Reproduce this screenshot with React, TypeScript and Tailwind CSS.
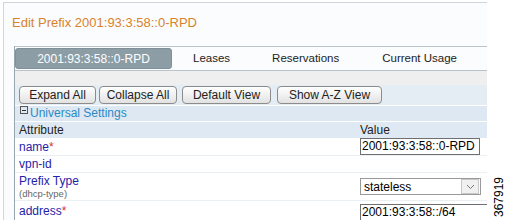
import React from "react";

const font = { fontFamily: '"Liberation Sans", Arial, sans-serif' };

function Btn({ label, cls }: { label: string; cls: string }) {
  return (
    <button
      className={`h-[18px] ${cls} rounded-[4px] border border-[#8c8c8c] bg-gradient-to-b from-[#ffffff] to-[#e2e2e2] text-[12px] leading-[16px] text-[#222] flex items-center justify-center shrink-0`}
    >
      {label}
    </button>
  );
}

export default function App() {
  return (
    <div className="relative w-[507px] h-[220px] overflow-hidden bg-white" style={font}>
      <div className="ml-[3px] mt-[2px] w-[484px] h-[218px] border-l border-t border-[#cfd5da] bg-[#fbfcfd] flex flex-col overflow-hidden">
        <div className="h-[43px] shrink-0 pl-[8px] pt-[12px] text-[13px] leading-[16px] text-[#d9822b]">
          Edit Prefix 2001:93:3:58::0-RPD
        </div>
        <div className="ml-[10px] flex-1 border-l border-[#9aa6ad] flex flex-col min-w-0">
          <div className="h-[25px] shrink-0 border-t border-b border-[#b9c3c9] flex items-center">
            <div className="h-[21px] w-[157px] shrink-0 rounded-[3px] bg-[#8c9da5] border border-[#7f9099] text-white text-[12px] flex items-center justify-center">
              2001:93:3:58::0-RPD
            </div>
            <div className="ml-[21px] text-[11.5px] text-[#222]">Leases</div>
            <div className="ml-[42px] text-[11.5px] text-[#222]">Reservations</div>
            <div className="ml-[43px] text-[11.5px] text-[#222]">Current Usage</div>
          </div>
          <div className="flex-1 bg-[#efefef] flex flex-col pt-[14px]">
            <div className="h-[20px] shrink-0 bg-[#e4ecf4] flex items-center pl-[4px]">
              <Btn label="Expand All" cls="w-[77px]" />
              <Btn label="Collapse All" cls="w-[78px] ml-[3px]" />
              <Btn label="Default View" cls="w-[89px] ml-[5px]" />
              <Btn label="Show A-Z View" cls="w-[105px] ml-[6px]" />
            </div>
            <div className="h-[16px] shrink-0 bg-[#dde8f2] border-t border-white flex pl-[5px] text-[12px] leading-[15px] text-[#2b8ac6]">
              <span className="w-[8px] h-[8px] border border-[#555] mr-[2px] flex items-center justify-center">
                <span className="w-[4px] h-[1px] bg-[#333]" />
              </span>
              Universal Settings
            </div>
            <div className="h-[17px] shrink-0 bg-[#dfe9f3] border-t border-white flex items-end text-[12px] leading-[15px] text-[#222]">
              <div className="w-[345px] shrink-0 pl-[4px]">Attribute</div>
              <div>Value</div>
            </div>
            <div className="bg-white flex-1 flex flex-col">
              <div className="h-[18px] shrink-0 flex items-center border-b border-[#eaeff4]">
                <div className="w-[345px] shrink-0 pl-[4px] text-[12px] text-[#1f23a8]">
                  name<span className="text-[#e0302a]">*</span>
                </div>
                <div className="w-[120px] shrink-0 h-[17px] border border-[#6f6f6f] bg-white text-[12px] leading-[15px] pl-[1px] text-black">
                  2001:93:3:58::0-RPD
                </div>
              </div>
              <div className="h-[17px] shrink-0 flex items-center border-b border-[#eaeff4]">
                <div className="pl-[4px] text-[12px] text-[#1f23a8]">vpn-id</div>
              </div>
              <div className="h-[28px] shrink-0 flex items-center border-b border-[#eaeff4]">
                <div className="w-[345px] shrink-0 pl-[4px] flex flex-col">
                  <span className="text-[12px] leading-[14px] text-[#1f23a8]">Prefix Type</span>
                  <span className="text-[9.5px] leading-[11px] text-[#666]">(dhcp-type)</span>
                </div>
                <div className="w-[121px] shrink-0 h-[17px] border border-[#9a9a9a] bg-white flex items-center">
                  <span className="flex-1 pl-[3px] text-[12px] text-black">stateless</span>
                  <span className="w-[18px] h-[15px] mr-[1px] border border-[#c8c8c8] bg-[#f0f0f0] flex items-center justify-center">
                    <svg width="9" height="6" viewBox="0 0 9 6">
                      <path d="M1 1 L4.5 4.5 L8 1" fill="none" stroke="#777" strokeWidth="1" />
                    </svg>
                  </span>
                </div>
              </div>
              <div className="h-[20px] shrink-0 flex items-start pt-[3px]">
                <div className="w-[345px] shrink-0 pl-[4px] text-[12px] leading-[14px] text-[#1f23a8]">
                  address<span className="text-[#e0302a]">*</span>
                </div>
                <div className="w-[135px] shrink-0 h-[17px] border border-[#6f6f6f] border-r-0 bg-white text-[12px] leading-[15px] pl-[1px] text-black">
                  2001:93:3:58::/64
                </div>
              </div>
            </div>
          </div>
        </div>
      </div>
      <div className="absolute left-[492px] top-[217px] origin-top-left -rotate-90 text-[12px] leading-[14px] text-black">
        367919
      </div>
    </div>
  );
}
